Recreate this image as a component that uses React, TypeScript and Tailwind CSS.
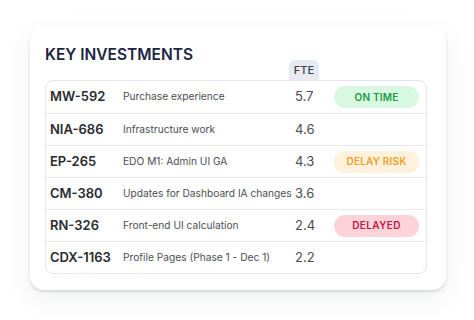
import React from "react";

type Status = "on-time" | "delay-risk" | "delayed";

type Investment = {
  id: string;
  title: string;
  fte: string;
  status?: Status;
};

const investments: Investment[] = [
  { id: "MW-592", title: "Purchase experience", fte: "5.7", status: "on-time" },
  { id: "NIA-686", title: "Infrastructure work", fte: "4.6" },
  { id: "EP-265", title: "EDO M1: Admin UI GA", fte: "4.3", status: "delay-risk" },
  { id: "CM-380", title: "Updates for Dashboard IA changes", fte: "3.6" },
  { id: "RN-326", title: "Front-end UI calculation", fte: "2.4", status: "delayed" },
  { id: "CDX-1163", title: "Profile Pages (Phase 1 - Dec 1)", fte: "2.2" },
];

const StatusBadge = ({ status }: { status?: Status }) => {
  if (!status) return null;
  if (status === "on-time")
    return (
      <div className="flex h-[22px] w-[85px] items-center justify-center rounded-full bg-[#d9f8e2] text-[10px] font-semibold tracking-[0.02em] text-[#1a9a45]">
        ON TIME
      </div>
    );
  if (status === "delay-risk")
    return (
      <div className="flex h-[22px] w-[85px] items-center justify-center rounded-full bg-[#fff1dc] text-[10px] font-semibold tracking-[0.02em] text-[#f0a223]">
        DELAY RISK
      </div>
    );
  return (
    <div className="flex h-[22px] w-[85px] items-center justify-center rounded-full bg-[#fdd3da] text-[10px] font-semibold tracking-[0.04em] text-[#c4173f]">
      DELAYED
    </div>
  );
};

export default function App() {
  return (
    <div className="min-h-[320px] w-[474px] bg-white pl-[30px] pt-[27px] font-['Inter',sans-serif]">
      <div className="h-[263px] w-[416px] rounded-[14px] bg-white pl-[15px] pr-[19px] shadow-[0_2px_3px_rgba(0,0,0,0.12),0_8px_28px_rgba(20,30,60,0.07)]">
        <div className="pt-[21px] text-[15.5px] font-semibold leading-[13px] text-[#1b2543]">
          KEY INVESTMENTS
        </div>

        <div className="ml-[244px] mt-[-1px] flex h-[20px] w-[30px] items-center justify-center rounded-t-[6px] bg-[#e7eaf1] text-[11px] font-medium text-[#3b3f4a]">
          FTE
        </div>

        <div className="rounded-[8px] border border-[#e4e6eb]">
          {investments.map((item, i) => (
            <div
              key={item.id}
              className={`flex h-[32px] items-center pl-[4px] ${
                i > 0 ? "border-t border-[#e9eaee]" : ""
              }`}
            >
              <div className="w-[73px] text-[13px] font-semibold text-[#2a2b30]">
                {item.id}
              </div>
              <div className="w-[172px] whitespace-nowrap text-[10.2px] text-[#4c4d53]">
                {item.title}
              </div>
              <div className="w-[39px] text-[13px] text-[#4a4b50]">{item.fte}</div>
              <StatusBadge status={item.status} />
            </div>
          ))}
        </div>
      </div>
    </div>
  );
}
